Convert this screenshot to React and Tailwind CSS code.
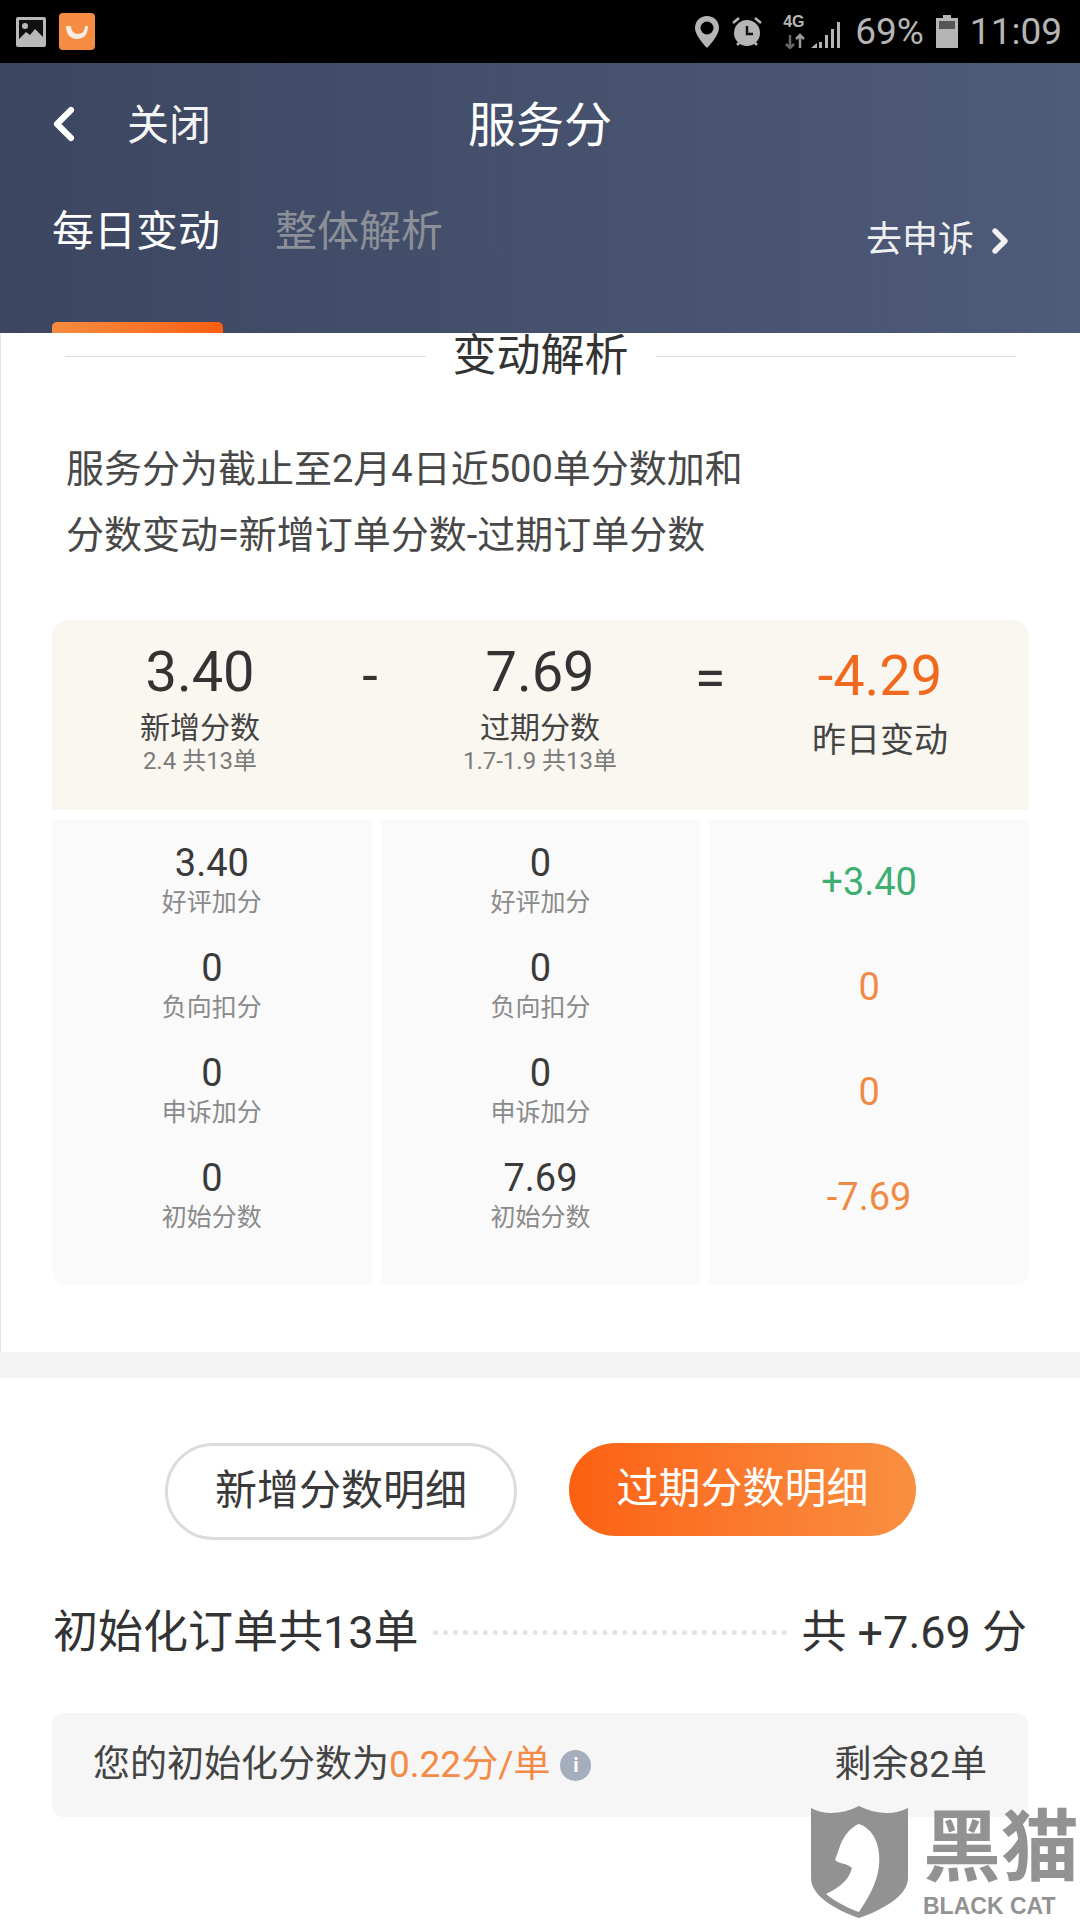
import { ChevronLeft, ChevronRight } from "lucide-react";

const rows = [
  { a: "3.40", b: "0", label: "好评加分", c: "+3.40", up: true },
  { a: "0", b: "0", label: "负向扣分", c: "0" },
  { a: "0", b: "0", label: "申诉加分", c: "0" },
  { a: "0", b: "7.69", label: "初始分数", c: "-7.69" },
];

function StatusBar() {
  return (
    <div className="h-[63px] bg-black flex items-center justify-between pl-[16px] pr-[18px] shrink-0">
      <div className="flex items-center gap-[13px]">
        <svg width="30" height="30" viewBox="0 0 30 30">
          <rect width="30" height="30" rx="2" fill="#b9b9b9" />
          <rect x="3" y="3" width="24" height="19" fill="#111" />
          <circle cx="9" cy="9" r="3" fill="#b9b9b9" />
          <path d="M3 22l7-7 4 3 5-6 8 8v8H3z" fill="#b9b9b9" />
        </svg>
        <svg width="36" height="37" viewBox="0 0 36 37">
          <rect width="36" height="37" rx="4" fill="#f68b42" />
          <path d="M7 13h22c0 8-4 13-11 13S7 21 7 13z" fill="#f5ece4" />
          <path d="M12 13h14c0 5-3 8-7 8s-7-3-7-8z" fill="#f68b42" />
        </svg>
      </div>
      <div className="flex items-center text-[#b5b5b5]">
        <svg width="24" height="32" viewBox="0 0 24 32" className="mr-[12px]">
          <path d="M12 0C5 0 0 5 0 12c0 8 12 20 12 20s12-12 12-20C24 5 19 0 12 0z" fill="#b5b5b5" />
          <circle cx="12" cy="12" r="6.5" fill="#000" />
        </svg>
        <svg width="32" height="32" viewBox="0 0 32 32" className="mr-[20px]">
          <circle cx="16" cy="17" r="13" fill="#b5b5b5" />
          <path d="M16 10v8h6" stroke="#111" strokeWidth="2.5" fill="none" />
          <path d="M2 7l6-5M30 7l-6-5M6 29l3-3M26 29l-3-3" stroke="#b5b5b5" strokeWidth="2.5" />
        </svg>
        <div className="relative w-[60px] h-[34px] mr-[12px]">
          <span className="absolute left-0 top-[-2px] text-[16px] leading-[18px] font-bold font-['Liberation_Sans',sans-serif]">4G</span>
          <svg width="60" height="34" viewBox="0 0 60 34" className="absolute left-0 top-0">
            <path d="M7 20v13M3 29l4 4 4-4" stroke="#666" strokeWidth="2.5" fill="none" />
            <path d="M17 33V20M13 24l4-4 4 4" stroke="#999" strokeWidth="2.5" fill="none" />
            <path d="M28 33l6-5v5zM36 27h3v6h-3zM42 20h3v13h-3zM48 14h3v19h-3zM54 7h3v26h-3z" fill="#b5b5b5" />
          </svg>
        </div>
        <span className="text-[37px] leading-none font-['Roboto',sans-serif] mr-[12px]">69%</span>
        <svg width="22" height="33" viewBox="0 0 22 33" className="mr-[12px]">
          <path d="M7 0h8v3h7v30H0V3h7z" fill="#b5b5b5" />
          <rect x="3" y="6" width="16" height="8" fill="#555" />
        </svg>
        <span className="text-[37px] leading-none font-['Roboto',sans-serif]">11:09</span>
      </div>
    </div>
  );
}

function Header() {
  return (
    <div className="h-[270px] shrink-0 bg-gradient-to-r from-[#3c4661] to-[#4e5b79] flex flex-col text-white">
      <div className="relative h-[126px] flex items-center pl-[36px]">
        <ChevronLeft size={56} strokeWidth={2.6} className="mt-[-5px] text-white" />
        <span className="ml-[35px] text-[42px] leading-none text-[#f4f4f4]">关闭</span>
        <span className="absolute left-0 right-0 text-center text-[48px] leading-none">服务分</span>
      </div>
      <div className="flex-1 flex items-start pl-[52px] pr-[60px] relative">
        <div className="flex flex-col w-[171px] h-full">
          <span className="mt-[18px] text-[42px] leading-[50px] whitespace-nowrap">每日变动</span>
          <div className="mt-auto h-[11px] rounded-t-[5px] bg-gradient-to-r from-[#f68c3e] to-[#fb5e10]" />
        </div>
        <span className="ml-[52px] mt-[18px] text-[42px] leading-[50px] text-[#8b8f98]">整体解析</span>
        <div className="ml-auto mt-[26px] flex items-center text-[36px] leading-[50px] text-[#f0f0f0]">
          去申诉
          <ChevronRight size={40} strokeWidth={3.2} className="ml-[6px] mt-[2px]" />
        </div>
      </div>
    </div>
  );
}

function Analysis() {
  return (
    <div className="h-[1019px] shrink-0 border-l border-[#e4e4e4] pt-0 flex flex-col">
      <div className="flex items-center pl-[64px] pr-[63px] h-[46px] mr-px">
        <div className="flex-1 h-px bg-[#dedede]" />
        <span className="px-[27px] text-[44px] leading-none text-[#333] mt-[-1px]">变动解析</span>
        <div className="flex-1 h-px bg-[#dedede]" />
      </div>
      <div className="mt-[57px] pl-[65px] text-[38px] leading-[66px] text-[#484848]">
        <p>服务分为截止至2月4日近500单分数加和</p>
        <p>分数变动=新增订单分数-过期订单分数</p>
      </div>
      <div className="mx-[51px] mt-[52px] h-[190px] rounded-t-[16px] bg-[#faf6f0] pl-[63px] pt-[24px]">
        <div className="w-[850px] grid grid-cols-5 text-center text-[#333]">
          <div className="flex flex-col items-center">
            <span className="text-[56px] leading-[56px]">3.40</span>
            <span className="mt-[10px] text-[30px] leading-[36px] text-[#444]">新增分数</span>
            <span className="text-[24px] leading-[30px] text-[#7a7a7a] whitespace-nowrap">2.4 共13单</span>
          </div>
          <div className="text-[56px] leading-[56px] pt-[4px]">-</div>
          <div className="flex flex-col items-center">
            <span className="text-[56px] leading-[56px]">7.69</span>
            <span className="mt-[10px] text-[30px] leading-[36px] text-[#444]">过期分数</span>
            <span className="text-[24px] leading-[30px] text-[#7a7a7a] whitespace-nowrap">1.7-1.9 共13单</span>
          </div>
          <div className="text-[56px] leading-[56px] pt-[6px]">=</div>
          <div className="flex flex-col items-center pt-[4px]">
            <span className="text-[56px] leading-[56px] text-[#f0691f]">-4.29</span>
            <span className="mt-[16px] text-[34px] leading-[40px] text-[#444] whitespace-nowrap">昨日变动</span>
          </div>
        </div>
      </div>
      <div className="mx-[51px] mt-[10px] h-[465px] grid grid-cols-3 gap-[9px]">
        <div className="bg-[#fafafa] rounded-bl-[14px] pt-[19px] text-center">
          {rows.map((r) => (
            <div key={r.label} className="h-[105px]">
              <div className="text-[38px] leading-[48px] text-[#3a3a3a]">{r.a}</div>
              <div className="text-[25px] leading-[32px] text-[#8a8a8a]">{r.label}</div>
            </div>
          ))}
        </div>
        <div className="bg-[#fafafa] pt-[19px] text-center">
          {rows.map((r) => (
            <div key={r.label} className="h-[105px]">
              <div className="text-[38px] leading-[48px] text-[#3a3a3a]">{r.b}</div>
              <div className="text-[25px] leading-[32px] text-[#8a8a8a]">{r.label}</div>
            </div>
          ))}
        </div>
        <div className="bg-[#fafafa] rounded-br-[14px] pt-[38px] text-center">
          {rows.map((r) => (
            <div key={r.label} className={r.up ? "h-[105px] text-[38px] leading-[48px] text-[#3fae72]" : "h-[105px] text-[38px] leading-[48px] text-[#f08a45]"}>
              {r.c}
            </div>
          ))}
        </div>
      </div>
    </div>
  );
}

function Detail() {
  return (
    <div className="flex-1 flex flex-col">
      <div className="flex pl-[165px] mt-[65px]">
        <div className="w-[352px] h-[97px] rounded-full border-[3px] border-[#dcdcdc] flex items-center justify-center text-[42px] text-[#3a3a3a] pb-[2px]">
          新增分数明细
        </div>
        <div className="ml-[52px] w-[347px] h-[93px] rounded-full bg-gradient-to-r from-[#fb6010] to-[#f98f40] flex items-center justify-center text-[42px] text-white pb-[2px]">
          过期分数明细
        </div>
      </div>
      <div className="mt-[62px] px-[53px] h-[60px] flex items-center text-[45px] leading-none text-[#333]">
        <span className="whitespace-nowrap">初始化订单共13单</span>
        <div className="flex-1 mx-[14px] border-t-[5px] border-dotted border-[#e3e3e3]" />
        <span className="whitespace-nowrap">共 +7.69 分</span>
      </div>
      <div className="mx-[52px] mt-[51px] h-[104px] rounded-[12px] bg-[#f6f6f6] flex items-center justify-between pl-[41px] pr-[41px] text-[37px] text-[#444]">
        <div className="flex items-center">
          您的初始化分数为<span className="text-[#f38a45]">0.22分/单</span>
          <span className="ml-[10px] w-[31px] h-[31px] rounded-full bg-[#a6adbd] text-white text-[20px] leading-none flex items-center justify-center font-bold">i</span>
        </div>
        <span>剩余82单</span>
      </div>
    </div>
  );
}

function Watermark() {
  return (
    <div className="absolute left-[811px] top-[1806px] w-[269px] h-[112px] text-[#929292]">
      <svg width="97" height="112" viewBox="0 0 97 112" className="absolute left-0 top-0">
        <path d="M0 2c14 8 32 6 48-2 16 8 34 10 49 2v70c0 18-26 32-49 40C25 104 0 90 0 72z" fill="#929292" />
        <path d="M48 18c-7 2-16 12-19 22l-5 14c4 4 12 3 17 8-4 14-14 20-26 26 10 8 22 14 33 18 12-18 22-36 20-58-1-14-8-26-20-30z" fill="#fff" />
      </svg>
      <span className="absolute left-[112px] top-[4px] text-[78px] leading-[78px] font-bold whitespace-nowrap">黑猫</span>
      <span className="absolute left-[112px] top-[88px] text-[23px] leading-[24px] font-bold whitespace-nowrap font-['Liberation_Sans',sans-serif]">BLACK CAT</span>
    </div>
  );
}

export default function App() {
  return (
    <div className="relative w-[1080px] h-[1920px] bg-white overflow-hidden flex flex-col font-['Roboto','Noto_Sans_CJK_SC',sans-serif]">
      <StatusBar />
      <Header />
      <Analysis />
      <div className="h-[26px] shrink-0 bg-[#f4f4f4]" />
      <Detail />
      <Watermark />
    </div>
  );
}
